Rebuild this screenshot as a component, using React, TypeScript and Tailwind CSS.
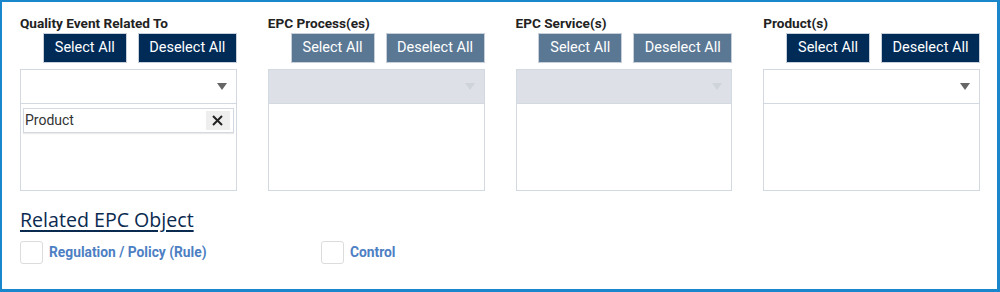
import React from "react";

function Column({
  label,
  enabled,
  tag,
}: {
  label: string;
  enabled: boolean;
  tag?: string;
}) {
  const btn = enabled
    ? "bg-[#002b57] text-white border border-[#c7d0da]"
    : "bg-[#5a7894] text-white border border-[#c7d0da]";
  return (
    <div className="flex flex-col">
      <div className="text-[13.6px] font-bold text-[#222] leading-[15px] h-[15px]">{label}</div>
      <div className="flex justify-end gap-[11px] mt-[2px]">
        <button className={`${btn} h-[30px] w-[84px] text-[14.5px] leading-none`}>Select All</button>
        <button className={`${btn} h-[30px] w-[99px] text-[14.5px] leading-none`}>Deselect All</button>
      </div>
      <div className="mt-[6px] border border-[#d3d9e1] h-[122px] flex flex-col">
        <div
          className={`h-[34px] border-b border-[#d3d9e1] flex items-center justify-end pr-[9px] ${
            enabled ? "bg-white" : "bg-[#dde1e7]"
          }`}
        >
          <svg width="10" height="7" viewBox="0 0 10 7">
            <path d="M0 0 L10 0 L5 7 Z" fill={enabled ? "#666" : "#cfd4da"} />
          </svg>
        </div>
        <div className="flex-1 bg-white pt-[4px] px-[2px]">
          {tag && (
            <div className="h-[25px] border border-[#d3d9e1] flex items-center justify-between pl-[1px] pr-[3px] shadow-[0_1px_1px_rgba(0,0,0,0.08)]">
              <span className="text-[14px] text-[#333]">{tag}</span>
              <span className="w-[24px] h-[19px] bg-[#eeeeee] flex items-center justify-center">
                <svg width="11" height="11" viewBox="0 0 11 11">
                  <path d="M1 1 L10 10 M10 1 L1 10" stroke="#222" strokeWidth="2" />
                </svg>
              </span>
            </div>
          )}
        </div>
      </div>
    </div>
  );
}

function Check({ label }: { label: string }) {
  return (
    <div className="flex items-center gap-[6px]">
      <div className="w-[23px] h-[23px] border border-[#dcdcdc] rounded-[3px] bg-white" />
      <span className="text-[13.8px] font-bold text-[#4d7fc4]">{label}</span>
    </div>
  );
}

export default function App() {
  return (
    <div
      className="w-[1000px] h-[292px] bg-white border-l-2 border-t-2 border-r-[3px] border-b-[3px] border-[#1a87cc] overflow-hidden"
      style={{ fontFamily: "Roboto, 'Liberation Sans', sans-serif" }}
    >
      <div className="pl-[18px] pr-[17px] pt-[14px]">
        <div className="grid grid-cols-4 gap-x-[31px]">
          <Column label="Quality Event Related To" enabled tag="Product" />
          <Column label="EPC Process(es)" enabled={false} />
          <Column label="EPC Service(s)" enabled={false} />
          <Column label="Product(s)" enabled />
        </div>
        <div
          className="mt-[17px] text-[19.6px] font-medium text-[#0a2a4f] underline underline-offset-[3px] decoration-[2px] leading-[24px]"
          style={{ fontFamily: "'Open Sans', 'Noto Sans', sans-serif" }}
        >
          Related EPC Object
        </div>
        <div className="flex mt-[9px]">
          <div className="w-[301px]">
            <Check label="Regulation / Policy (Rule)" />
          </div>
          <Check label="Control" />
        </div>
      </div>
    </div>
  );
}
